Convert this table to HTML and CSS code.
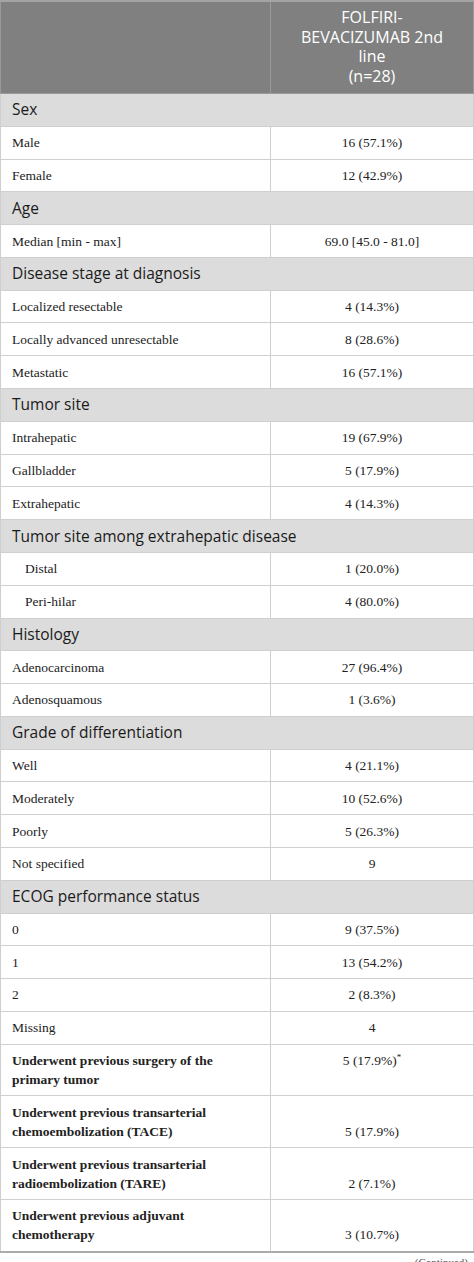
FILE: index.html
```html
<!DOCTYPE html>
<html>
<head>
<meta charset="utf-8">
<link rel="stylesheet" href="styles.css">
</head>
<body>
<table class="tbl">
  <colgroup><col class="c1"><col class="c2"></colgroup>
  <thead>
    <tr class="head">
      <th></th>
      <th>FOLFIRI-<br>BEVACIZUMAB 2nd<br>line<br>(n=28)</th>
    </tr>
  </thead>
  <tbody>
    <tr class="sec"><td colspan="2">Sex</td></tr>
    <tr><td>Male</td><td class="v">16 (57.1%)</td></tr>
    <tr><td>Female</td><td class="v">12 (42.9%)</td></tr>
    <tr class="sec"><td colspan="2">Age</td></tr>
    <tr><td>Median [min - max]</td><td class="v">69.0 [45.0 - 81.0]</td></tr>
    <tr class="sec"><td colspan="2">Disease stage at diagnosis</td></tr>
    <tr><td>Localized resectable</td><td class="v">4 (14.3%)</td></tr>
    <tr><td>Locally advanced unresectable</td><td class="v">8 (28.6%)</td></tr>
    <tr><td>Metastatic</td><td class="v">16 (57.1%)</td></tr>
    <tr class="sec"><td colspan="2">Tumor site</td></tr>
    <tr><td>Intrahepatic</td><td class="v">19 (67.9%)</td></tr>
    <tr><td>Gallbladder</td><td class="v">5 (17.9%)</td></tr>
    <tr><td>Extrahepatic</td><td class="v">4 (14.3%)</td></tr>
    <tr class="sec"><td colspan="2">Tumor site among extrahepatic disease</td></tr>
    <tr><td class="ind">Distal</td><td class="v">1 (20.0%)</td></tr>
    <tr><td class="ind">Peri-hilar</td><td class="v">4 (80.0%)</td></tr>
    <tr class="sec"><td colspan="2">Histology</td></tr>
    <tr><td>Adenocarcinoma</td><td class="v">27 (96.4%)</td></tr>
    <tr><td>Adenosquamous</td><td class="v">1 (3.6%)</td></tr>
    <tr class="sec"><td colspan="2">Grade of differentiation</td></tr>
    <tr><td>Well</td><td class="v">4 (21.1%)</td></tr>
    <tr><td>Moderately</td><td class="v">10 (52.6%)</td></tr>
    <tr><td>Poorly</td><td class="v">5 (26.3%)</td></tr>
    <tr><td>Not specified</td><td class="v">9</td></tr>
    <tr class="sec"><td colspan="2">ECOG performance status</td></tr>
    <tr><td>0</td><td class="v">9 (37.5%)</td></tr>
    <tr><td>1</td><td class="v">13 (54.2%)</td></tr>
    <tr><td>2</td><td class="v">2 (8.3%)</td></tr>
    <tr><td>Missing</td><td class="v">4</td></tr>
    <tr class="bold"><td>Underwent previous surgery of the<br>primary tumor</td><td class="v top">5 (17.9%)<sup>*</sup></td></tr>
    <tr class="bold"><td>Underwent previous transarterial<br>chemoembolization (TACE)</td><td class="v bot">5 (17.9%)</td></tr>
    <tr class="bold"><td>Underwent previous transarterial<br>radioembolization (TARE)</td><td class="v bot">2 (7.1%)</td></tr>
    <tr class="bold last"><td>Underwent previous adjuvant<br>chemotherapy</td><td class="v bot">3 (10.7%)</td></tr>
  </tbody>
</table>
<div class="cont">(Continued)</div>
</body>
</html>
```
FILE: styles.css
```css
html, body {
  margin: 0;
  padding: 0;
  background: #ffffff;
}
body {
  width: 474px;
  overflow: hidden;
}
.tbl {
  width: 473px;
  border-collapse: collapse;
  table-layout: fixed;
  border-top: 2px solid #a3a3a3;
  border-bottom: 2px solid #ababab;
  font-family: "Liberation Serif", "Times New Roman", serif;
  font-size: 13.5px;
  color: #222222;
}
.c1 { width: 270px; }
.c2 { width: 203px; }
.tbl td, .tbl th {
  border: 1px solid #cfcfcf;
  padding: 6.4px 11px;
  line-height: 19px;
  vertical-align: middle;
  text-align: left;
}
.head th {
  background: #808080;
  color: #ffffff;
  font-family: "Open Sans", "Liberation Sans", sans-serif;
  font-weight: 400;
  font-size: 16px;
  line-height: 19.5px;
  text-align: center;
  padding: 6px 8px 7px;
  border-color: #9a9a9a;
}
.sec td {
  background: #dcdcdc;
  font-family: "Open Sans", "Liberation Sans", sans-serif;
  font-size: 15.5px;
  color: #1a1a1a;
}
.tbl td.v {
  text-align: center;
}
.tbl td.ind {
  padding-left: 24px;
}
.tbl td.top {
  vertical-align: top;
}
.tbl td.bot {
  vertical-align: bottom;
}
.bold td:first-child {
  font-weight: 700;
}
sup {
  font-size: 9px;
  line-height: 0;
  vertical-align: 5px;
}
.cont {
  text-align: right;
  font-family: "Liberation Serif", serif;
  font-size: 11px;
  color: #555;
  padding: 3px 6px 0 0;
}
```
